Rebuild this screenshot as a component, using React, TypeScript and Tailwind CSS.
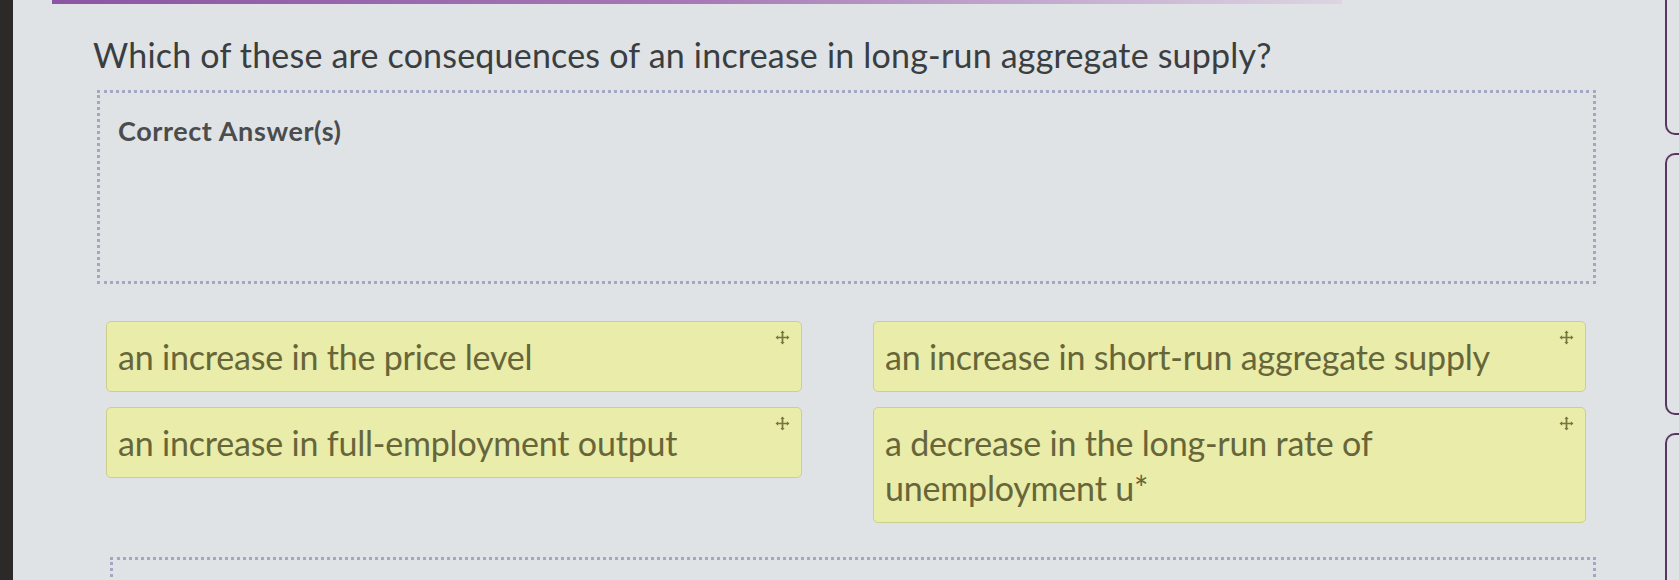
import React from 'react'

const sans = "font-['Lato','Open_Sans',sans-serif]"

// little four-way drag handle in the corner of each choice
const DragHandle = () => (
    <svg width="15" height="15" viewBox="0 0 14 14" className="shrink-0">
        <path d="M7 2.5v9M2.5 7h9" stroke="#76753f" strokeWidth="1.6" />
        <path d="M7 0.5l2 2.4H5zM7 13.5l2-2.4H5zM0.5 7l2.4-2v4zM13.5 7l-2.4-2v4z" fill="#76753f" />
    </svg>
)

const Choice = ({ text }: { text: React.ReactNode }) => (
    <div className="flex items-start justify-between rounded-[5px] border border-[#cdcf8e] bg-[#eaeca9] pl-[11px] pr-[11px] py-[12px]">
        <span className={`${sans} text-[34px] leading-[45px] text-[#66663a] tracking-[-0.2px]`}>{text}</span>
        <div className="-mt-[4px]">
            <DragHandle />
        </div>
    </div>
)

const App = () => {
    return (
        <div className="flex h-[580px] w-[1679px] overflow-hidden bg-[#dfe3e5]">
            {/* bezel */}
            <div className="w-[13px] shrink-0 bg-[#2b2a28]" />

            <div className="flex-1">
                <div className="ml-[39px] h-[4px] w-[1290px] bg-gradient-to-r from-[#8c55a3] via-[#a779b6] to-[#dcd5e2]" />

                <h1 className={`${sans} ml-[80px] mt-[31px] text-[34px] leading-[40px] tracking-[0.2px] text-[#3a3e41]`}>
                    Which of these are consequences of an increase in long-run aggregate supply?
                </h1>

                {/* drop target */}
                <div className="ml-[84px] mt-[15px] h-[194px] w-[1499px] border-[3px] border-dotted border-[#a3a7c3] pl-[18px] pt-[23px]">
                    <p className={`${sans} text-[27px] font-bold leading-[30px] tracking-[0.6px] text-[#4a4c4e]`}>Correct Answer(s)</p>
                </div>

                <div className="ml-[93px] mt-[37px] grid w-[1480px] grid-cols-[696px_713px] items-start gap-x-[71px] gap-y-[15px]">
                    <Choice text="an increase in the price level" />
                    <Choice text="an increase in short-run aggregate supply" />
                    <Choice text="an increase in full-employment output" />
                    <Choice text={<>a decrease in the long-run rate of<br />unemployment u*</>} />
                </div>

                <div className="ml-[97px] mt-[34px] h-[80px] w-[1486px] border-[3px] border-dotted border-[#a3a7c3]" />
            </div>

            {/* side tabs */}
            <div className="flex w-[14px] shrink-0 flex-col gap-[18px]">
                <div className="-mt-[20px] h-[155px] shrink-0 rounded-l-[10px] border-y-2 border-l-2 border-[#5b3561]" />
                <div className="h-[262px] shrink-0 rounded-l-[10px] border-y-2 border-l-2 border-[#5b3561]" />
                <div className="h-[200px] shrink-0 rounded-l-[10px] border-y-2 border-l-2 border-[#5b3561]" />
            </div>
        </div>
    )
}

export default App
